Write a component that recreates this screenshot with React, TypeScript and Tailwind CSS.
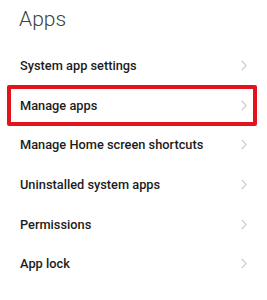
import React from "react";

const items = [
  "System app settings",
  "Manage apps",
  "Manage Home screen shortcuts",
  "Uninstalled system apps",
  "Permissions",
  "App lock",
];

function Chevron() {
  return (
    <svg width="6" height="11" viewBox="0 0 6 11" className="shrink-0">
      <path d="M0.8 0.8 L5 5.5 L0.8 10.2" fill="none" stroke="#c4c4c4" strokeWidth="1.1" />
    </svg>
  );
}

export default function App() {
  return (
    <div className="w-[267px] h-[300px] bg-white overflow-hidden" style={{ fontFamily: "Roboto, 'Noto Sans', sans-serif" }}>
      <div className="pl-[19px] pt-[5px] h-[46px] text-[21px] font-light leading-[28px] text-[#404040]">Apps</div>
      <div className="flex flex-col">
        {items.map((t) => (
          <div key={t} className="relative h-[39.6px] flex items-center justify-between pl-[20px] pr-[20px]">
            <span className="text-[12.8px] font-medium text-[#1c1c1c]">{t}</span>
            <Chevron />
            {t === "Manage apps" && (
              <div className="absolute left-[7px] right-[10px] top-[-0.5px] bottom-[-0.5px] border-[4px] border-[#e3121b] rounded-[2px]" />
            )}
          </div>
        ))}
      </div>
    </div>
  );
}
